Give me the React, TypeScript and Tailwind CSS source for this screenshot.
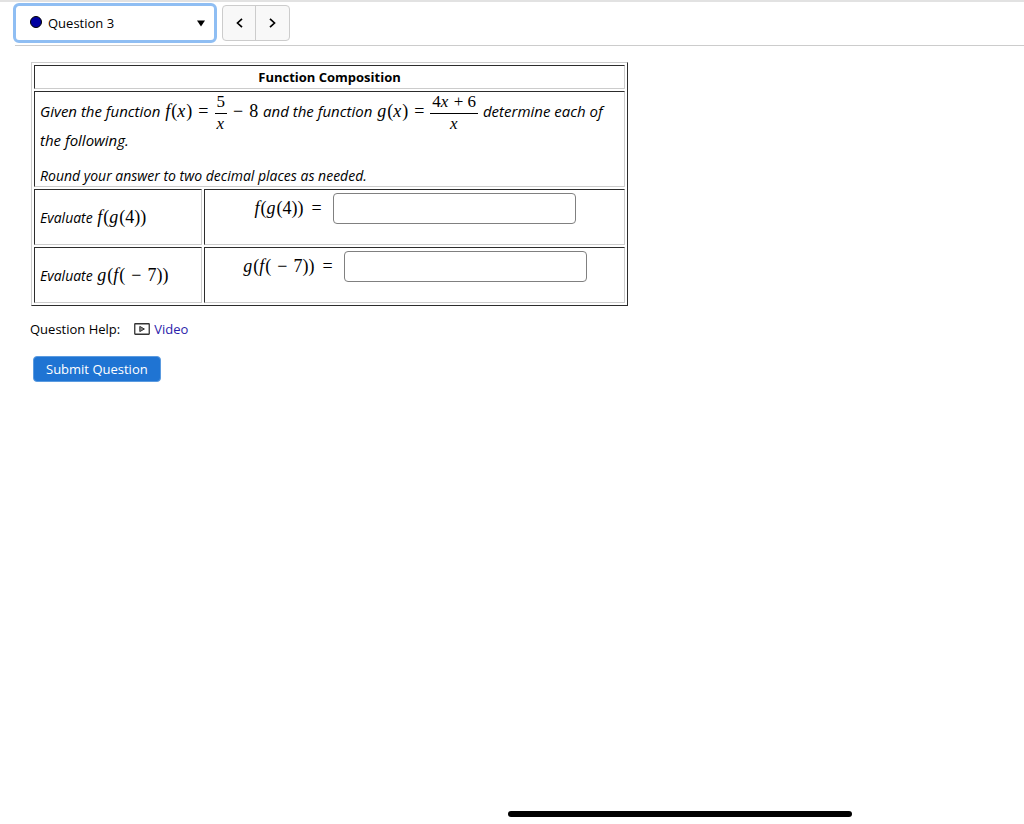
import type { ReactNode } from 'react'

type Part = {
  id: string
  prompt: ReactNode
  label: string
}

function V({ children }: { children: ReactNode }) {
  return <i className="mr-px">{children}</i>
}

function M({ children }: { children: ReactNode }) {
  return (
    <span className="px-px whitespace-nowrap font-['Liberation_Serif',serif] text-[18px] leading-5 not-italic">
      {children}
    </span>
  )
}

function Op({ children }: { children: ReactNode }) {
  return <span className="mx-1.5">{children}</span>
}

function Fraction({ top, bottom }: { top: ReactNode; bottom: ReactNode }) {
  return (
    <span className="-my-1 inline-flex flex-col items-center align-middle text-[17px]">
      <span className="border-b border-black px-0.5 pb-px">{top}</span>
      <span>{bottom}</span>
    </span>
  )
}

const PARTS: Part[] = [
  {
    id: 'fg4',
    prompt: <M><V>f</V>(<V>g</V>(4))</M>,
    label: 'f(g(4))',
  },
  {
    id: 'gf7',
    prompt: <M><V>g</V>(<V>f</V>(<Op>−</Op>7))</M>,
    label: 'g(f(-7))',
  },
]

const CELL = 'border border-t-[#2c2c2c] border-l-[#2c2c2c] border-r-[#cccccc] border-b-[#cccccc]'

export default function App() {
  return (
    <div className="min-h-screen bg-white font-['Open_Sans','Noto_Sans',sans-serif] text-[13px] leading-5 text-black">
      {/* Question navigation */}
      <header className="flex h-[45px] items-start border-t-2 border-[#e2e2e2] pl-[13px]">
        <div className="relative mt-px w-[204px]">
          <select
            aria-label="Question"
            className="h-10 w-full appearance-none rounded-md border-3 border-[#8fbef3] bg-white pl-8 outline-none">
            <option>Question 3</option>
          </select>
          <span className="pointer-events-none absolute top-[13px] left-[17px] size-3 rounded-full border border-black bg-[#0000a0]" />
          <svg className="pointer-events-none absolute top-[17px] right-3 h-[7px] w-2" viewBox="0 0 8 7">
            <path d="M0 0.5h8L4 6.5z" />
          </svg>
        </div>
        <div className="mt-[3px] ml-[5px] flex h-9 divide-x divide-[#cccccc] rounded border border-[#cccccc] bg-[#f8f8f8]">
          <button aria-label="Previous question" className="flex w-[33px] items-center justify-center">
            <svg width="7" height="10" viewBox="0 0 7 10" fill="none" stroke="black" strokeWidth="1.7">
              <path d="M6 0.8L1.5 5L6 9.2" />
            </svg>
          </button>
          <button aria-label="Next question" className="flex w-[33px] items-center justify-center">
            <svg width="7" height="10" viewBox="0 0 7 10" fill="none" stroke="black" strokeWidth="1.7">
              <path d="M1 0.8L5.5 5L1 9.2" />
            </svg>
          </button>
        </div>
      </header>
      <hr className="ml-[15px] border-[#cccccc]" />

      <main className="px-[30px] pt-4">
        <table className="ml-px w-full max-w-[597px] table-fixed border-separate border-spacing-0.5 border border-t-[#cccccc] border-r-[#2c2c2c] border-b-[#2c2c2c] border-l-[#cccccc]">
          <colgroup>
            <col className="w-[168px]" />
            <col />
          </colgroup>
          <tbody>
            <tr>
              <th colSpan={2} className={`${CELL} h-6 p-0`}>Function Composition</th>
            </tr>
            <tr>
              <td colSpan={2} className={`${CELL} px-[5px] pt-1 pb-0 text-[14px] leading-5 italic`}>
                <p className="text-[15px] leading-5">
                  Given the function{' '}
                  <M><V>f</V>(<V>x</V>)<Op>=</Op><Fraction top="5" bottom={<V>x</V>} /><Op>−</Op>8</M>{' '}
                  and the function{' '}
                  <M><V>g</V>(<V>x</V>)<Op>=</Op><Fraction top={<>4<V>x</V> + 6</>} bottom={<V>x</V>} /></M>{' '}
                  determine each of
                  <br />
                  the following.
                </p>
                <p className="mt-4">Round your answer to two decimal places as needed.</p>
              </td>
            </tr>
            {PARTS.map(p => (
              <tr key={p.id}>
                <td className={`${CELL} h-14 px-[5px] py-0 align-middle text-[14px] leading-5 italic`}>
                  Evaluate {p.prompt}
                </td>
                <td className={`${CELL} px-1 pt-[3px] pb-0 align-top`}>
                  <div className="flex items-center justify-center">
                    <label htmlFor={p.id}>{p.prompt}<M><Op>=</Op></M></label>
                    <input
                      id={p.id}
                      aria-label={p.label}
                      className="ml-1 h-[31px] w-[243px] rounded border border-[#808080] bg-white px-2"
                    />
                  </div>
                </td>
              </tr>
            ))}
          </tbody>
        </table>

        <p className="mt-[13px] flex items-center">
          Question Help:
          <a href="#video" className="ml-[14px] flex items-center gap-1 text-[#2a22aa]">
            <svg width="16" height="12" viewBox="0 0 16 12" fill="none" stroke="#333">
              <rect x="0.75" y="0.75" width="14.5" height="10.5" rx="0.5" strokeWidth="1.3" />
              <path d="M5.8 3.4v5.2L10.4 6z" fill="#888" />
            </svg>
            Video
          </a>
        </p>

        <button className="mt-[17px] ml-[3px] h-[26px] rounded border border-[#5b9be0] bg-[#1f74d3] px-3 text-white">
          Submit Question
        </button>
      </main>

      <div className="fixed bottom-[7px] left-[508px] h-[6px] w-[344px] rounded-full bg-black" />
    </div>
  )
}
